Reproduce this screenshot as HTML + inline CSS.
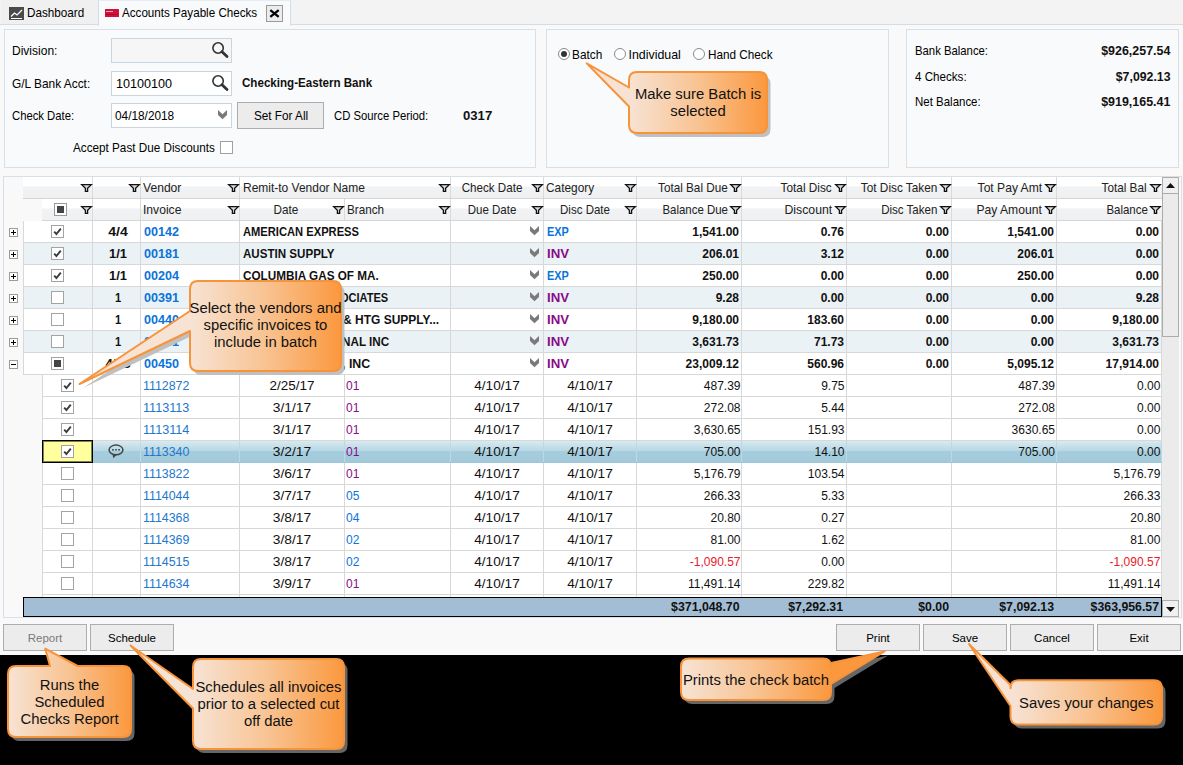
<!DOCTYPE html><html><head><meta charset="utf-8"><style>
html,body{margin:0;padding:0;}
body{width:1183px;height:765px;position:relative;overflow:hidden;background:#000;font-family:"Liberation Sans",sans-serif;}
.t{position:absolute;white-space:nowrap;}
.b{position:absolute;box-sizing:border-box;}
svg{position:absolute;overflow:visible;}
</style></head><body>
<div class="b" style="left:0px;top:0px;width:1183px;height:655px;background:#f9f9fa;"></div>
<div class="b" style="left:0px;top:0px;width:1183px;height:25px;background:#f3f3f3;border-bottom:1px solid #d3dde5;"></div>
<div class="b" style="left:1px;top:0px;width:98px;height:25px;background:#f0f0f0;border-right:1px solid #dfe5ea;border-bottom:1px solid #d3dde5;"></div>
<div class="b" style="left:98px;top:0px;width:193px;height:26px;background:#f9fafb;border:1px solid #d3dde5;border-bottom:none;border-top-color:#e6ecf0;"></div>
<svg style="left:9px;top:7px" width="15" height="13" viewBox="0 0 15 13"><rect x="0" y="0" width="15" height="13" fill="#4a4a4a"/><path d="M2,9.5 L5.5,6 L8,8 L13,3" stroke="#fff" stroke-width="1.2" fill="none"/><path d="M2,11.5 H13" stroke="#fff" stroke-width="1" fill="none"/></svg>
<div class="t" style="left:27.00px;top:4.70px;font-size:12.4px;line-height:16px;color:#000;transform:scaleX(0.9435);transform-origin:left center;">Dashboard</div>
<svg style="left:105px;top:9px" width="14" height="8" viewBox="0 0 14 8"><rect x="0" y="0" width="14" height="8" rx="0.5" fill="#d0103a"/><rect x="1" y="2" width="7" height="1" fill="#f3a0b0"/><rect x="1" y="5" width="12" height="0.8" fill="#a00828"/></svg>
<div class="t" style="left:122.00px;top:4.70px;font-size:12.4px;line-height:16px;color:#000;transform:scaleX(0.9392);transform-origin:left center;">Accounts Payable Checks</div>
<div class="b" style="left:266px;top:5px;width:17px;height:17px;background:#ececec;border:1px solid #9a9a9a;"></div>
<svg style="left:269px;top:9px" width="11" height="9" viewBox="0 0 11 9"><path d="M1.3,1.2 L9.7,7.8 M9.7,1.2 L1.3,7.8" stroke="#000" stroke-width="2.3"/></svg>
<div class="b" style="left:4px;top:29px;width:532px;height:139px;background:#f9fafb;border:1px solid #d6e0e6;"></div>
<div class="b" style="left:546px;top:29px;width:343px;height:139px;background:#f9fafb;border:1px solid #d6e0e6;"></div>
<div class="b" style="left:906px;top:29px;width:273px;height:139px;background:#f9fafb;border:1px solid #d6e0e6;"></div>
<div class="t" style="left:12.40px;top:42.70px;font-size:12.4px;line-height:16px;color:#000;transform:scaleX(0.9695);transform-origin:left center;">Division:</div>
<div class="b" style="left:111px;top:38px;width:121px;height:25px;background:#f6f6f6;border:1px solid #c9d6df;"></div>
<div class="t" style="left:12.40px;top:75.70px;font-size:12.4px;line-height:16px;color:#000;transform:scaleX(0.9595);transform-origin:left center;">G/L Bank Acct:</div>
<div class="b" style="left:111px;top:71px;width:121px;height:25px;background:#fff;border:1px solid #c9d6df;"></div>
<svg style="left:212px;top:42px" width="16" height="16" viewBox="0 0 16 16"><circle cx="6.1" cy="6" r="5.2" stroke="#333" stroke-width="1.6" fill="none"/><path d="M10,9.8 L15,14.6" stroke="#333" stroke-width="2.8" stroke-linecap="round"/></svg>
<svg style="left:212px;top:75px" width="16" height="16" viewBox="0 0 16 16"><circle cx="6.1" cy="6" r="5.2" stroke="#333" stroke-width="1.6" fill="none"/><path d="M10,9.8 L15,14.6" stroke="#333" stroke-width="2.8" stroke-linecap="round"/></svg>
<div class="t" style="left:116.30px;top:75.74px;font-size:12.3px;line-height:16px;color:#000;transform:scaleX(1.0252);transform-origin:left center;">10100100</div>
<div class="t" style="left:241.80px;top:74.84px;font-size:12px;line-height:16px;font-weight:700;color:#111;transform:scaleX(0.9657);transform-origin:left center;">Checking-Eastern Bank</div>
<div class="t" style="left:12.40px;top:107.70px;font-size:12.4px;line-height:16px;color:#000;transform:scaleX(0.9107);transform-origin:left center;">Check Date:</div>
<div class="b" style="left:111px;top:103px;width:121px;height:25px;background:#fff;border:1px solid #c9d6df;"></div>
<div class="t" style="left:115.00px;top:107.84px;font-size:12px;line-height:16px;color:#000;transform:scaleX(0.9856);transform-origin:left center;">04/18/2018</div>
<svg style="left:218px;top:110px" width="9" height="10" viewBox="0 0 9 10"><path d="M0,0 L4.5,4.3 L9,0 L9,5 L4.5,9.3 L0,5 Z" fill="#7a7a7a"/></svg>
<div class="b" style="left:237px;top:102px;width:87px;height:27px;background:#ececec;border:1px solid #adadad;"></div>
<div class="t" style="left:130.50px;width:300px;text-align:center;top:107.70px;font-size:12.4px;line-height:16px;color:#000;transform:scaleX(0.9483);transform-origin:center center;">Set For All</div>
<div class="t" style="left:334.00px;top:107.70px;font-size:12.4px;line-height:16px;color:#000;transform:scaleX(0.9118);transform-origin:left center;">CD Source Period:</div>
<div class="t" style="left:462.70px;top:107.74px;font-size:12.3px;line-height:16px;font-weight:700;color:#111;transform:scaleX(1.0673);transform-origin:left center;">0317</div>
<div class="t" style="left:73.20px;top:139.70px;font-size:12.4px;line-height:16px;color:#000;transform:scaleX(0.9451);transform-origin:left center;">Accept Past Due Discounts</div>
<div class="b" style="left:220px;top:141px;width:13px;height:13px;background:#fff;border:1px solid #a0a0a0;"></div>
<svg style="left:558px;top:48px" width="12" height="12" viewBox="0 0 12 12"><circle cx="6" cy="6" r="5.5" fill="#fff" stroke="#8a8a8a" stroke-width="1"/><circle cx="6" cy="6" r="3" fill="#333"/></svg>
<div class="t" style="left:572.40px;top:46.70px;font-size:12.4px;line-height:16px;color:#000;transform:scaleX(0.9531);transform-origin:left center;">Batch</div>
<svg style="left:614px;top:48px" width="12" height="12" viewBox="0 0 12 12"><circle cx="6" cy="6" r="5.5" fill="#fff" stroke="#8a8a8a" stroke-width="1"/></svg>
<div class="t" style="left:628.50px;top:46.70px;font-size:12.4px;line-height:16px;color:#000;">Individual</div>
<svg style="left:693px;top:48px" width="12" height="12" viewBox="0 0 12 12"><circle cx="6" cy="6" r="5.5" fill="#fff" stroke="#8a8a8a" stroke-width="1"/></svg>
<div class="t" style="left:707.60px;top:46.70px;font-size:12.4px;line-height:16px;color:#000;transform:scaleX(0.9474);transform-origin:left center;">Hand Check</div>
<div class="t" style="left:914.60px;top:42.70px;font-size:12.4px;line-height:16px;color:#000;transform:scaleX(0.9136);transform-origin:left center;">Bank Balance:</div>
<div class="t" style="right:12.50px;top:42.74px;font-size:12.3px;line-height:16px;font-weight:700;color:#111;transform:scaleX(1.0118);transform-origin:right center;">$926,257.54</div>
<div class="t" style="left:914.60px;top:68.70px;font-size:12.4px;line-height:16px;color:#000;transform:scaleX(0.9366);transform-origin:left center;">4 Checks:</div>
<div class="t" style="right:12.50px;top:68.74px;font-size:12.3px;line-height:16px;font-weight:700;color:#111;">$7,092.13</div>
<div class="t" style="left:914.60px;top:93.70px;font-size:12.4px;line-height:16px;color:#000;transform:scaleX(0.9260);transform-origin:left center;">Net Balance:</div>
<div class="t" style="right:12.50px;top:93.74px;font-size:12.3px;line-height:16px;font-weight:700;color:#111;transform:scaleX(1.0118);transform-origin:right center;">$919,165.41</div>
<div class="b" style="left:3px;top:176px;width:1179px;height:442px;background:#f9f9fa;border:1px solid #d6e0e6;"></div>
<div class="b" style="left:23px;top:177px;width:1139px;height:22px;background:linear-gradient(#ffffff 0,#ffffff 9px,#f0f2f4 10px,#eef0f2 100%);border-bottom:1px solid #d5d5d5;"></div>
<div class="b" style="left:42px;top:199px;width:1120px;height:22px;background:linear-gradient(#ffffff 0,#ffffff 9px,#f0f2f4 10px,#eef0f2 100%);border-bottom:1px solid #d5d5d5;"></div>
<div class="b" style="left:92px;top:177px;width:1px;height:21px;background:#dadada;"></div>
<div class="b" style="left:140px;top:177px;width:1px;height:21px;background:#dadada;"></div>
<div class="b" style="left:239px;top:177px;width:1px;height:21px;background:#dadada;"></div>
<div class="b" style="left:450px;top:177px;width:1px;height:21px;background:#dadada;"></div>
<div class="b" style="left:543px;top:177px;width:1px;height:21px;background:#dadada;"></div>
<div class="b" style="left:636px;top:177px;width:1px;height:21px;background:#dadada;"></div>
<div class="b" style="left:741px;top:177px;width:1px;height:21px;background:#dadada;"></div>
<div class="b" style="left:846px;top:177px;width:1px;height:21px;background:#dadada;"></div>
<div class="b" style="left:951px;top:177px;width:1px;height:21px;background:#dadada;"></div>
<div class="b" style="left:1056px;top:177px;width:1px;height:21px;background:#dadada;"></div>
<div class="b" style="left:92px;top:199px;width:1px;height:21px;background:#dadada;"></div>
<div class="b" style="left:140px;top:199px;width:1px;height:21px;background:#dadada;"></div>
<div class="b" style="left:239px;top:199px;width:1px;height:21px;background:#dadada;"></div>
<div class="b" style="left:344px;top:199px;width:1px;height:21px;background:#dadada;"></div>
<div class="b" style="left:450px;top:199px;width:1px;height:21px;background:#dadada;"></div>
<div class="b" style="left:543px;top:199px;width:1px;height:21px;background:#dadada;"></div>
<div class="b" style="left:636px;top:199px;width:1px;height:21px;background:#dadada;"></div>
<div class="b" style="left:741px;top:199px;width:1px;height:21px;background:#dadada;"></div>
<div class="b" style="left:846px;top:199px;width:1px;height:21px;background:#dadada;"></div>
<div class="b" style="left:951px;top:199px;width:1px;height:21px;background:#dadada;"></div>
<div class="b" style="left:1056px;top:199px;width:1px;height:21px;background:#dadada;"></div>
<svg style="left:81px;top:184px" width="11" height="8" viewBox="0 0 11 8"><path d="M0.7,0.7 H10.3 L6.6,4.3 V7.3 H4.4 V4.3 Z" fill="#d8d8d8" stroke="#111" stroke-width="1.3" stroke-linejoin="miter"/></svg>
<svg style="left:129px;top:184px" width="11" height="8" viewBox="0 0 11 8"><path d="M0.7,0.7 H10.3 L6.6,4.3 V7.3 H4.4 V4.3 Z" fill="#d8d8d8" stroke="#111" stroke-width="1.3" stroke-linejoin="miter"/></svg>
<div class="t" style="left:143.40px;top:179.70px;font-size:12.4px;line-height:16px;color:#222;transform:scaleX(0.9776);transform-origin:left center;">Vendor</div>
<svg style="left:228px;top:184px" width="11" height="8" viewBox="0 0 11 8"><path d="M0.7,0.7 H10.3 L6.6,4.3 V7.3 H4.4 V4.3 Z" fill="#d8d8d8" stroke="#111" stroke-width="1.3" stroke-linejoin="miter"/></svg>
<div class="t" style="left:242.50px;top:179.70px;font-size:12.4px;line-height:16px;color:#222;transform:scaleX(0.9672);transform-origin:left center;">Remit-to Vendor Name</div>
<svg style="left:439px;top:184px" width="11" height="8" viewBox="0 0 11 8"><path d="M0.7,0.7 H10.3 L6.6,4.3 V7.3 H4.4 V4.3 Z" fill="#d8d8d8" stroke="#111" stroke-width="1.3" stroke-linejoin="miter"/></svg>
<div class="t" style="left:341.55px;width:300px;text-align:center;top:179.70px;font-size:12.4px;line-height:16px;color:#222;transform:scaleX(0.9375);transform-origin:center center;">Check Date</div>
<svg style="left:532px;top:184px" width="11" height="8" viewBox="0 0 11 8"><path d="M0.7,0.7 H10.3 L6.6,4.3 V7.3 H4.4 V4.3 Z" fill="#d8d8d8" stroke="#111" stroke-width="1.3" stroke-linejoin="miter"/></svg>
<div class="t" style="left:546.00px;top:179.70px;font-size:12.4px;line-height:16px;color:#222;transform:scaleX(0.9566);transform-origin:left center;">Category</div>
<svg style="left:625px;top:184px" width="11" height="8" viewBox="0 0 11 8"><path d="M0.7,0.7 H10.3 L6.6,4.3 V7.3 H4.4 V4.3 Z" fill="#d8d8d8" stroke="#111" stroke-width="1.3" stroke-linejoin="miter"/></svg>
<div class="t" style="right:455.50px;top:179.70px;font-size:12.4px;line-height:16px;color:#222;transform:scaleX(0.9443);transform-origin:right center;">Total Bal Due</div>
<svg style="left:730px;top:184px" width="11" height="8" viewBox="0 0 11 8"><path d="M0.7,0.7 H10.3 L6.6,4.3 V7.3 H4.4 V4.3 Z" fill="#d8d8d8" stroke="#111" stroke-width="1.3" stroke-linejoin="miter"/></svg>
<div class="t" style="right:351.00px;top:179.70px;font-size:12.4px;line-height:16px;color:#222;transform:scaleX(0.9513);transform-origin:right center;">Total Disc</div>
<svg style="left:835px;top:184px" width="11" height="8" viewBox="0 0 11 8"><path d="M0.7,0.7 H10.3 L6.6,4.3 V7.3 H4.4 V4.3 Z" fill="#d8d8d8" stroke="#111" stroke-width="1.3" stroke-linejoin="miter"/></svg>
<div class="t" style="right:246.00px;top:179.70px;font-size:12.4px;line-height:16px;color:#222;transform:scaleX(0.9522);transform-origin:right center;">Tot Disc Taken</div>
<svg style="left:940px;top:184px" width="11" height="8" viewBox="0 0 11 8"><path d="M0.7,0.7 H10.3 L6.6,4.3 V7.3 H4.4 V4.3 Z" fill="#d8d8d8" stroke="#111" stroke-width="1.3" stroke-linejoin="miter"/></svg>
<div class="t" style="right:141.00px;top:179.70px;font-size:12.4px;line-height:16px;color:#222;transform:scaleX(0.9757);transform-origin:right center;">Tot Pay Amt</div>
<svg style="left:1045px;top:184px" width="11" height="8" viewBox="0 0 11 8"><path d="M0.7,0.7 H10.3 L6.6,4.3 V7.3 H4.4 V4.3 Z" fill="#d8d8d8" stroke="#111" stroke-width="1.3" stroke-linejoin="miter"/></svg>
<div class="t" style="right:36.20px;top:179.70px;font-size:12.4px;line-height:16px;color:#222;transform:scaleX(0.9467);transform-origin:right center;">Total Bal</div>
<svg style="left:1150px;top:184px" width="11" height="8" viewBox="0 0 11 8"><path d="M0.7,0.7 H10.3 L6.6,4.3 V7.3 H4.4 V4.3 Z" fill="#d8d8d8" stroke="#111" stroke-width="1.3" stroke-linejoin="miter"/></svg>
<div class="b" style="left:54px;top:203px;width:13px;height:13px;background:#fff;border:1px solid #9a9a9a;"></div>
<div class="b" style="left:57px;top:206px;width:7px;height:7px;background:#444;"></div>
<svg style="left:81px;top:206px" width="11" height="8" viewBox="0 0 11 8"><path d="M0.7,0.7 H10.3 L6.6,4.3 V7.3 H4.4 V4.3 Z" fill="#d8d8d8" stroke="#111" stroke-width="1.3" stroke-linejoin="miter"/></svg>
<div class="t" style="left:143.40px;top:201.70px;font-size:12.4px;line-height:16px;color:#222;transform:scaleX(0.9780);transform-origin:left center;">Invoice</div>
<svg style="left:228px;top:206px" width="11" height="8" viewBox="0 0 11 8"><path d="M0.7,0.7 H10.3 L6.6,4.3 V7.3 H4.4 V4.3 Z" fill="#d8d8d8" stroke="#111" stroke-width="1.3" stroke-linejoin="miter"/></svg>
<div class="t" style="left:136.30px;width:300px;text-align:center;top:201.70px;font-size:12.4px;line-height:16px;color:#222;transform:scaleX(0.9470);transform-origin:center center;">Date</div>
<svg style="left:333px;top:206px" width="11" height="8" viewBox="0 0 11 8"><path d="M0.7,0.7 H10.3 L6.6,4.3 V7.3 H4.4 V4.3 Z" fill="#d8d8d8" stroke="#111" stroke-width="1.3" stroke-linejoin="miter"/></svg>
<div class="t" style="left:347.40px;top:201.70px;font-size:12.4px;line-height:16px;color:#222;transform:scaleX(0.9448);transform-origin:left center;">Branch</div>
<svg style="left:439px;top:206px" width="11" height="8" viewBox="0 0 11 8"><path d="M0.7,0.7 H10.3 L6.6,4.3 V7.3 H4.4 V4.3 Z" fill="#d8d8d8" stroke="#111" stroke-width="1.3" stroke-linejoin="miter"/></svg>
<div class="t" style="left:341.50px;width:300px;text-align:center;top:201.70px;font-size:12.4px;line-height:16px;color:#222;transform:scaleX(0.9282);transform-origin:center center;">Due Date</div>
<svg style="left:532px;top:206px" width="11" height="8" viewBox="0 0 11 8"><path d="M0.7,0.7 H10.3 L6.6,4.3 V7.3 H4.4 V4.3 Z" fill="#d8d8d8" stroke="#111" stroke-width="1.3" stroke-linejoin="miter"/></svg>
<div class="t" style="left:434.50px;width:300px;text-align:center;top:201.70px;font-size:12.4px;line-height:16px;color:#222;transform:scaleX(0.9289);transform-origin:center center;">Disc Date</div>
<svg style="left:625px;top:206px" width="11" height="8" viewBox="0 0 11 8"><path d="M0.7,0.7 H10.3 L6.6,4.3 V7.3 H4.4 V4.3 Z" fill="#d8d8d8" stroke="#111" stroke-width="1.3" stroke-linejoin="miter"/></svg>
<div class="t" style="right:455.50px;top:201.70px;font-size:12.4px;line-height:16px;color:#222;transform:scaleX(0.9231);transform-origin:right center;">Balance Due</div>
<svg style="left:730px;top:206px" width="11" height="8" viewBox="0 0 11 8"><path d="M0.7,0.7 H10.3 L6.6,4.3 V7.3 H4.4 V4.3 Z" fill="#d8d8d8" stroke="#111" stroke-width="1.3" stroke-linejoin="miter"/></svg>
<div class="t" style="right:350.70px;top:201.70px;font-size:12.4px;line-height:16px;color:#222;transform:scaleX(0.9892);transform-origin:right center;">Discount</div>
<svg style="left:835px;top:206px" width="11" height="8" viewBox="0 0 11 8"><path d="M0.7,0.7 H10.3 L6.6,4.3 V7.3 H4.4 V4.3 Z" fill="#d8d8d8" stroke="#111" stroke-width="1.3" stroke-linejoin="miter"/></svg>
<div class="t" style="right:246.00px;top:201.70px;font-size:12.4px;line-height:16px;color:#222;transform:scaleX(0.9308);transform-origin:right center;">Disc Taken</div>
<svg style="left:940px;top:206px" width="11" height="8" viewBox="0 0 11 8"><path d="M0.7,0.7 H10.3 L6.6,4.3 V7.3 H4.4 V4.3 Z" fill="#d8d8d8" stroke="#111" stroke-width="1.3" stroke-linejoin="miter"/></svg>
<div class="t" style="right:141.00px;top:201.70px;font-size:12.4px;line-height:16px;color:#222;transform:scaleX(0.9789);transform-origin:right center;">Pay Amount</div>
<svg style="left:1045px;top:206px" width="11" height="8" viewBox="0 0 11 8"><path d="M0.7,0.7 H10.3 L6.6,4.3 V7.3 H4.4 V4.3 Z" fill="#d8d8d8" stroke="#111" stroke-width="1.3" stroke-linejoin="miter"/></svg>
<div class="t" style="right:35.70px;top:201.70px;font-size:12.4px;line-height:16px;color:#222;transform:scaleX(0.9245);transform-origin:right center;">Balance</div>
<svg style="left:1150px;top:206px" width="11" height="8" viewBox="0 0 11 8"><path d="M0.7,0.7 H10.3 L6.6,4.3 V7.3 H4.4 V4.3 Z" fill="#d8d8d8" stroke="#111" stroke-width="1.3" stroke-linejoin="miter"/></svg>
<div class="b" style="left:1162px;top:177px;width:17px;height:440px;background:#ebebeb;"></div>
<div class="b" style="left:1162px;top:177px;width:17px;height:17px;background:#f0f0f0;border:1px solid #adadad;"></div>
<svg style="left:1166px;top:183px" width="9" height="5" viewBox="0 0 9 5"><path d="M0,5 L4.5,0 L9,5 Z" fill="#111"/></svg>
<div class="b" style="left:1162px;top:193px;width:17px;height:144px;background:#ebebeb;border:1px solid #ababab;"></div>
<div class="b" style="left:1162px;top:600px;width:17px;height:17px;background:#f0f0f0;border:1px solid #adadad;"></div>
<svg style="left:1166px;top:607px" width="9" height="5" viewBox="0 0 9 5"><path d="M0,0 L4.5,5 L9,0 Z" fill="#111"/></svg>
<div class="b" style="left:23px;top:221px;width:1139px;height:22px;background:#ffffff;border-bottom:1px solid #d8d8d8;border-left:1px solid #d8d8d8;"></div>
<div class="b" style="left:92px;top:221px;width:1px;height:21px;background:#d8d8d8;"></div>
<div class="b" style="left:140px;top:221px;width:1px;height:21px;background:#d8d8d8;"></div>
<div class="b" style="left:239px;top:221px;width:1px;height:21px;background:#d8d8d8;"></div>
<div class="b" style="left:450px;top:221px;width:1px;height:21px;background:#d8d8d8;"></div>
<div class="b" style="left:543px;top:221px;width:1px;height:21px;background:#d8d8d8;"></div>
<div class="b" style="left:636px;top:221px;width:1px;height:21px;background:#d8d8d8;"></div>
<div class="b" style="left:741px;top:221px;width:1px;height:21px;background:#d8d8d8;"></div>
<div class="b" style="left:846px;top:221px;width:1px;height:21px;background:#d8d8d8;"></div>
<div class="b" style="left:951px;top:221px;width:1px;height:21px;background:#d8d8d8;"></div>
<div class="b" style="left:1056px;top:221px;width:1px;height:21px;background:#d8d8d8;"></div>
<div class="b" style="left:1161px;top:221px;width:1px;height:21px;background:#d8d8d8;"></div>
<div class="b" style="left:9px;top:228px;width:9px;height:9px;background:#fff;border:1px solid #9c9c9c;"></div>
<div class="b" style="left:11px;top:232px;width:5px;height:1px;background:#000;"></div>
<div class="b" style="left:13px;top:230px;width:1px;height:5px;background:#000;"></div>
<div class="b" style="left:51px;top:225px;width:13px;height:13px;background:#fff;border:1px solid #a3a3a3;"></div>
<svg style="left:51px;top:225px" width="13" height="13" viewBox="0 0 13 13"><path d="M3.2,6.6 L5.4,9 L9.8,3.6" stroke="#3c3c3c" stroke-width="1.9" fill="none"/></svg>
<div class="t" style="left:-32.50px;width:300px;text-align:center;top:223.74px;font-size:12.3px;line-height:16px;font-weight:700;color:#111;transform:scaleX(1.1456);transform-origin:center center;">4/4</div>
<div class="t" style="left:143.60px;top:223.74px;font-size:12.3px;line-height:16px;font-weight:700;color:#0a74da;transform:scaleX(1.0233);transform-origin:left center;">00142</div>
<div class="t" style="left:242.50px;top:223.74px;font-size:12.3px;line-height:16px;font-weight:700;color:#111;transform:scaleX(0.9078);transform-origin:left center;">AMERICAN EXPRESS</div>
<svg style="left:530px;top:226px" width="9" height="10" viewBox="0 0 9 10"><path d="M0,0 L4.5,4.3 L9,0 L9,5 L4.5,9.3 L0,5 Z" fill="#7a7a7a"/></svg>
<div class="t" style="left:546.70px;top:223.74px;font-size:12.3px;line-height:16px;font-weight:700;color:#0a74da;transform:scaleX(0.8858);transform-origin:left center;">EXP</div>
<div class="t" style="right:444.00px;top:223.84px;font-size:12px;line-height:16px;font-weight:700;color:#111;">1,541.00</div>
<div class="t" style="right:339.00px;top:223.84px;font-size:12px;line-height:16px;font-weight:700;color:#111;">0.76</div>
<div class="t" style="right:234.00px;top:223.84px;font-size:12px;line-height:16px;font-weight:700;color:#111;">0.00</div>
<div class="t" style="right:129.00px;top:223.84px;font-size:12px;line-height:16px;font-weight:700;color:#111;">1,541.00</div>
<div class="t" style="right:24.00px;top:223.84px;font-size:12px;line-height:16px;font-weight:700;color:#111;">0.00</div>
<div class="b" style="left:23px;top:243px;width:1139px;height:22px;background:#ebf2f5;border-bottom:1px solid #d8d8d8;border-left:1px solid #d8d8d8;"></div>
<div class="b" style="left:92px;top:243px;width:1px;height:21px;background:#d8d8d8;"></div>
<div class="b" style="left:140px;top:243px;width:1px;height:21px;background:#d8d8d8;"></div>
<div class="b" style="left:239px;top:243px;width:1px;height:21px;background:#d8d8d8;"></div>
<div class="b" style="left:450px;top:243px;width:1px;height:21px;background:#d8d8d8;"></div>
<div class="b" style="left:543px;top:243px;width:1px;height:21px;background:#d8d8d8;"></div>
<div class="b" style="left:636px;top:243px;width:1px;height:21px;background:#d8d8d8;"></div>
<div class="b" style="left:741px;top:243px;width:1px;height:21px;background:#d8d8d8;"></div>
<div class="b" style="left:846px;top:243px;width:1px;height:21px;background:#d8d8d8;"></div>
<div class="b" style="left:951px;top:243px;width:1px;height:21px;background:#d8d8d8;"></div>
<div class="b" style="left:1056px;top:243px;width:1px;height:21px;background:#d8d8d8;"></div>
<div class="b" style="left:1161px;top:243px;width:1px;height:21px;background:#d8d8d8;"></div>
<div class="b" style="left:9px;top:250px;width:9px;height:9px;background:#fff;border:1px solid #9c9c9c;"></div>
<div class="b" style="left:11px;top:254px;width:5px;height:1px;background:#000;"></div>
<div class="b" style="left:13px;top:252px;width:1px;height:5px;background:#000;"></div>
<div class="b" style="left:51px;top:247px;width:13px;height:13px;background:#fff;border:1px solid #a3a3a3;"></div>
<svg style="left:51px;top:247px" width="13" height="13" viewBox="0 0 13 13"><path d="M3.2,6.6 L5.4,9 L9.8,3.6" stroke="#3c3c3c" stroke-width="1.9" fill="none"/></svg>
<div class="t" style="left:-32.50px;width:300px;text-align:center;top:245.74px;font-size:12.3px;line-height:16px;font-weight:700;color:#111;transform:scaleX(1.0462);transform-origin:center center;">1/1</div>
<div class="t" style="left:143.60px;top:245.74px;font-size:12.3px;line-height:16px;font-weight:700;color:#0a74da;transform:scaleX(1.0233);transform-origin:left center;">00181</div>
<div class="t" style="left:242.50px;top:245.74px;font-size:12.3px;line-height:16px;font-weight:700;color:#111;transform:scaleX(0.9418);transform-origin:left center;">AUSTIN SUPPLY</div>
<svg style="left:530px;top:248px" width="9" height="10" viewBox="0 0 9 10"><path d="M0,0 L4.5,4.3 L9,0 L9,5 L4.5,9.3 L0,5 Z" fill="#7a7a7a"/></svg>
<div class="t" style="left:546.70px;top:245.74px;font-size:12.3px;line-height:16px;font-weight:700;color:#8a0a8a;transform:scaleX(1.0780);transform-origin:left center;">INV</div>
<div class="t" style="right:444.00px;top:245.84px;font-size:12px;line-height:16px;font-weight:700;color:#111;">206.01</div>
<div class="t" style="right:339.00px;top:245.84px;font-size:12px;line-height:16px;font-weight:700;color:#111;">3.12</div>
<div class="t" style="right:234.00px;top:245.84px;font-size:12px;line-height:16px;font-weight:700;color:#111;">0.00</div>
<div class="t" style="right:129.00px;top:245.84px;font-size:12px;line-height:16px;font-weight:700;color:#111;">206.01</div>
<div class="t" style="right:24.00px;top:245.84px;font-size:12px;line-height:16px;font-weight:700;color:#111;">0.00</div>
<div class="b" style="left:23px;top:265px;width:1139px;height:22px;background:#ffffff;border-bottom:1px solid #d8d8d8;border-left:1px solid #d8d8d8;"></div>
<div class="b" style="left:92px;top:265px;width:1px;height:21px;background:#d8d8d8;"></div>
<div class="b" style="left:140px;top:265px;width:1px;height:21px;background:#d8d8d8;"></div>
<div class="b" style="left:239px;top:265px;width:1px;height:21px;background:#d8d8d8;"></div>
<div class="b" style="left:450px;top:265px;width:1px;height:21px;background:#d8d8d8;"></div>
<div class="b" style="left:543px;top:265px;width:1px;height:21px;background:#d8d8d8;"></div>
<div class="b" style="left:636px;top:265px;width:1px;height:21px;background:#d8d8d8;"></div>
<div class="b" style="left:741px;top:265px;width:1px;height:21px;background:#d8d8d8;"></div>
<div class="b" style="left:846px;top:265px;width:1px;height:21px;background:#d8d8d8;"></div>
<div class="b" style="left:951px;top:265px;width:1px;height:21px;background:#d8d8d8;"></div>
<div class="b" style="left:1056px;top:265px;width:1px;height:21px;background:#d8d8d8;"></div>
<div class="b" style="left:1161px;top:265px;width:1px;height:21px;background:#d8d8d8;"></div>
<div class="b" style="left:9px;top:272px;width:9px;height:9px;background:#fff;border:1px solid #9c9c9c;"></div>
<div class="b" style="left:11px;top:276px;width:5px;height:1px;background:#000;"></div>
<div class="b" style="left:13px;top:274px;width:1px;height:5px;background:#000;"></div>
<div class="b" style="left:51px;top:269px;width:13px;height:13px;background:#fff;border:1px solid #a3a3a3;"></div>
<svg style="left:51px;top:269px" width="13" height="13" viewBox="0 0 13 13"><path d="M3.2,6.6 L5.4,9 L9.8,3.6" stroke="#3c3c3c" stroke-width="1.9" fill="none"/></svg>
<div class="t" style="left:-32.50px;width:300px;text-align:center;top:267.74px;font-size:12.3px;line-height:16px;font-weight:700;color:#111;transform:scaleX(1.0462);transform-origin:center center;">1/1</div>
<div class="t" style="left:143.60px;top:267.74px;font-size:12.3px;line-height:16px;font-weight:700;color:#0a74da;transform:scaleX(1.0233);transform-origin:left center;">00204</div>
<div class="t" style="left:242.50px;top:267.74px;font-size:12.3px;line-height:16px;font-weight:700;color:#111;transform:scaleX(0.9541);transform-origin:left center;">COLUMBIA GAS OF MA.</div>
<svg style="left:530px;top:270px" width="9" height="10" viewBox="0 0 9 10"><path d="M0,0 L4.5,4.3 L9,0 L9,5 L4.5,9.3 L0,5 Z" fill="#7a7a7a"/></svg>
<div class="t" style="left:546.70px;top:267.74px;font-size:12.3px;line-height:16px;font-weight:700;color:#0a74da;transform:scaleX(0.8858);transform-origin:left center;">EXP</div>
<div class="t" style="right:444.00px;top:267.84px;font-size:12px;line-height:16px;font-weight:700;color:#111;">250.00</div>
<div class="t" style="right:339.00px;top:267.84px;font-size:12px;line-height:16px;font-weight:700;color:#111;">0.00</div>
<div class="t" style="right:234.00px;top:267.84px;font-size:12px;line-height:16px;font-weight:700;color:#111;">0.00</div>
<div class="t" style="right:129.00px;top:267.84px;font-size:12px;line-height:16px;font-weight:700;color:#111;">250.00</div>
<div class="t" style="right:24.00px;top:267.84px;font-size:12px;line-height:16px;font-weight:700;color:#111;">0.00</div>
<div class="b" style="left:23px;top:287px;width:1139px;height:22px;background:#ebf2f5;border-bottom:1px solid #d8d8d8;border-left:1px solid #d8d8d8;"></div>
<div class="b" style="left:92px;top:287px;width:1px;height:21px;background:#d8d8d8;"></div>
<div class="b" style="left:140px;top:287px;width:1px;height:21px;background:#d8d8d8;"></div>
<div class="b" style="left:239px;top:287px;width:1px;height:21px;background:#d8d8d8;"></div>
<div class="b" style="left:450px;top:287px;width:1px;height:21px;background:#d8d8d8;"></div>
<div class="b" style="left:543px;top:287px;width:1px;height:21px;background:#d8d8d8;"></div>
<div class="b" style="left:636px;top:287px;width:1px;height:21px;background:#d8d8d8;"></div>
<div class="b" style="left:741px;top:287px;width:1px;height:21px;background:#d8d8d8;"></div>
<div class="b" style="left:846px;top:287px;width:1px;height:21px;background:#d8d8d8;"></div>
<div class="b" style="left:951px;top:287px;width:1px;height:21px;background:#d8d8d8;"></div>
<div class="b" style="left:1056px;top:287px;width:1px;height:21px;background:#d8d8d8;"></div>
<div class="b" style="left:1161px;top:287px;width:1px;height:21px;background:#d8d8d8;"></div>
<div class="b" style="left:9px;top:294px;width:9px;height:9px;background:#fff;border:1px solid #9c9c9c;"></div>
<div class="b" style="left:11px;top:298px;width:5px;height:1px;background:#000;"></div>
<div class="b" style="left:13px;top:296px;width:1px;height:5px;background:#000;"></div>
<div class="b" style="left:51px;top:291px;width:13px;height:13px;background:#fff;border:1px solid #a3a3a3;"></div>
<div class="t" style="left:-32.50px;width:300px;text-align:center;top:289.74px;font-size:12.3px;line-height:16px;font-weight:700;color:#111;transform:scaleX(0.9059);transform-origin:center center;">1</div>
<div class="t" style="left:143.60px;top:289.74px;font-size:12.3px;line-height:16px;font-weight:700;color:#0a74da;transform:scaleX(1.0233);transform-origin:left center;">00391</div>
<svg style="left:530px;top:292px" width="9" height="10" viewBox="0 0 9 10"><path d="M0,0 L4.5,4.3 L9,0 L9,5 L4.5,9.3 L0,5 Z" fill="#7a7a7a"/></svg>
<div class="t" style="left:546.70px;top:289.74px;font-size:12.3px;line-height:16px;font-weight:700;color:#8a0a8a;transform:scaleX(1.0780);transform-origin:left center;">INV</div>
<div class="t" style="right:444.00px;top:289.84px;font-size:12px;line-height:16px;font-weight:700;color:#111;">9.28</div>
<div class="t" style="right:339.00px;top:289.84px;font-size:12px;line-height:16px;font-weight:700;color:#111;">0.00</div>
<div class="t" style="right:234.00px;top:289.84px;font-size:12px;line-height:16px;font-weight:700;color:#111;">0.00</div>
<div class="t" style="right:129.00px;top:289.84px;font-size:12px;line-height:16px;font-weight:700;color:#111;">0.00</div>
<div class="t" style="right:24.00px;top:289.84px;font-size:12px;line-height:16px;font-weight:700;color:#111;">9.28</div>
<div class="b" style="left:23px;top:309px;width:1139px;height:22px;background:#ffffff;border-bottom:1px solid #d8d8d8;border-left:1px solid #d8d8d8;"></div>
<div class="b" style="left:92px;top:309px;width:1px;height:21px;background:#d8d8d8;"></div>
<div class="b" style="left:140px;top:309px;width:1px;height:21px;background:#d8d8d8;"></div>
<div class="b" style="left:239px;top:309px;width:1px;height:21px;background:#d8d8d8;"></div>
<div class="b" style="left:450px;top:309px;width:1px;height:21px;background:#d8d8d8;"></div>
<div class="b" style="left:543px;top:309px;width:1px;height:21px;background:#d8d8d8;"></div>
<div class="b" style="left:636px;top:309px;width:1px;height:21px;background:#d8d8d8;"></div>
<div class="b" style="left:741px;top:309px;width:1px;height:21px;background:#d8d8d8;"></div>
<div class="b" style="left:846px;top:309px;width:1px;height:21px;background:#d8d8d8;"></div>
<div class="b" style="left:951px;top:309px;width:1px;height:21px;background:#d8d8d8;"></div>
<div class="b" style="left:1056px;top:309px;width:1px;height:21px;background:#d8d8d8;"></div>
<div class="b" style="left:1161px;top:309px;width:1px;height:21px;background:#d8d8d8;"></div>
<div class="b" style="left:9px;top:316px;width:9px;height:9px;background:#fff;border:1px solid #9c9c9c;"></div>
<div class="b" style="left:11px;top:320px;width:5px;height:1px;background:#000;"></div>
<div class="b" style="left:13px;top:318px;width:1px;height:5px;background:#000;"></div>
<div class="b" style="left:51px;top:313px;width:13px;height:13px;background:#fff;border:1px solid #a3a3a3;"></div>
<div class="t" style="left:-32.50px;width:300px;text-align:center;top:311.74px;font-size:12.3px;line-height:16px;font-weight:700;color:#111;transform:scaleX(0.9059);transform-origin:center center;">1</div>
<div class="t" style="left:143.60px;top:311.74px;font-size:12.3px;line-height:16px;font-weight:700;color:#0a74da;transform:scaleX(1.0233);transform-origin:left center;">00440</div>
<svg style="left:530px;top:314px" width="9" height="10" viewBox="0 0 9 10"><path d="M0,0 L4.5,4.3 L9,0 L9,5 L4.5,9.3 L0,5 Z" fill="#7a7a7a"/></svg>
<div class="t" style="left:546.70px;top:311.74px;font-size:12.3px;line-height:16px;font-weight:700;color:#8a0a8a;transform:scaleX(1.0780);transform-origin:left center;">INV</div>
<div class="t" style="right:444.00px;top:311.84px;font-size:12px;line-height:16px;font-weight:700;color:#111;">9,180.00</div>
<div class="t" style="right:339.00px;top:311.84px;font-size:12px;line-height:16px;font-weight:700;color:#111;">183.60</div>
<div class="t" style="right:234.00px;top:311.84px;font-size:12px;line-height:16px;font-weight:700;color:#111;">0.00</div>
<div class="t" style="right:129.00px;top:311.84px;font-size:12px;line-height:16px;font-weight:700;color:#111;">0.00</div>
<div class="t" style="right:24.00px;top:311.84px;font-size:12px;line-height:16px;font-weight:700;color:#111;">9,180.00</div>
<div class="b" style="left:23px;top:331px;width:1139px;height:22px;background:#ebf2f5;border-bottom:1px solid #d8d8d8;border-left:1px solid #d8d8d8;"></div>
<div class="b" style="left:92px;top:331px;width:1px;height:21px;background:#d8d8d8;"></div>
<div class="b" style="left:140px;top:331px;width:1px;height:21px;background:#d8d8d8;"></div>
<div class="b" style="left:239px;top:331px;width:1px;height:21px;background:#d8d8d8;"></div>
<div class="b" style="left:450px;top:331px;width:1px;height:21px;background:#d8d8d8;"></div>
<div class="b" style="left:543px;top:331px;width:1px;height:21px;background:#d8d8d8;"></div>
<div class="b" style="left:636px;top:331px;width:1px;height:21px;background:#d8d8d8;"></div>
<div class="b" style="left:741px;top:331px;width:1px;height:21px;background:#d8d8d8;"></div>
<div class="b" style="left:846px;top:331px;width:1px;height:21px;background:#d8d8d8;"></div>
<div class="b" style="left:951px;top:331px;width:1px;height:21px;background:#d8d8d8;"></div>
<div class="b" style="left:1056px;top:331px;width:1px;height:21px;background:#d8d8d8;"></div>
<div class="b" style="left:1161px;top:331px;width:1px;height:21px;background:#d8d8d8;"></div>
<div class="b" style="left:9px;top:338px;width:9px;height:9px;background:#fff;border:1px solid #9c9c9c;"></div>
<div class="b" style="left:11px;top:342px;width:5px;height:1px;background:#000;"></div>
<div class="b" style="left:13px;top:340px;width:1px;height:5px;background:#000;"></div>
<div class="b" style="left:51px;top:335px;width:13px;height:13px;background:#fff;border:1px solid #a3a3a3;"></div>
<div class="t" style="left:-32.50px;width:300px;text-align:center;top:333.74px;font-size:12.3px;line-height:16px;font-weight:700;color:#111;transform:scaleX(0.9059);transform-origin:center center;">1</div>
<div class="t" style="left:143.60px;top:333.74px;font-size:12.3px;line-height:16px;font-weight:700;color:#0a74da;transform:scaleX(1.0233);transform-origin:left center;">00441</div>
<svg style="left:530px;top:336px" width="9" height="10" viewBox="0 0 9 10"><path d="M0,0 L4.5,4.3 L9,0 L9,5 L4.5,9.3 L0,5 Z" fill="#7a7a7a"/></svg>
<div class="t" style="left:546.70px;top:333.74px;font-size:12.3px;line-height:16px;font-weight:700;color:#8a0a8a;transform:scaleX(1.0780);transform-origin:left center;">INV</div>
<div class="t" style="right:444.00px;top:333.84px;font-size:12px;line-height:16px;font-weight:700;color:#111;">3,631.73</div>
<div class="t" style="right:339.00px;top:333.84px;font-size:12px;line-height:16px;font-weight:700;color:#111;">71.73</div>
<div class="t" style="right:234.00px;top:333.84px;font-size:12px;line-height:16px;font-weight:700;color:#111;">0.00</div>
<div class="t" style="right:129.00px;top:333.84px;font-size:12px;line-height:16px;font-weight:700;color:#111;">0.00</div>
<div class="t" style="right:24.00px;top:333.84px;font-size:12px;line-height:16px;font-weight:700;color:#111;">3,631.73</div>
<div class="b" style="left:23px;top:353px;width:1139px;height:22px;background:#ffffff;border-bottom:1px solid #d8d8d8;border-left:1px solid #d8d8d8;"></div>
<div class="b" style="left:92px;top:353px;width:1px;height:21px;background:#d8d8d8;"></div>
<div class="b" style="left:140px;top:353px;width:1px;height:21px;background:#d8d8d8;"></div>
<div class="b" style="left:239px;top:353px;width:1px;height:21px;background:#d8d8d8;"></div>
<div class="b" style="left:450px;top:353px;width:1px;height:21px;background:#d8d8d8;"></div>
<div class="b" style="left:543px;top:353px;width:1px;height:21px;background:#d8d8d8;"></div>
<div class="b" style="left:636px;top:353px;width:1px;height:21px;background:#d8d8d8;"></div>
<div class="b" style="left:741px;top:353px;width:1px;height:21px;background:#d8d8d8;"></div>
<div class="b" style="left:846px;top:353px;width:1px;height:21px;background:#d8d8d8;"></div>
<div class="b" style="left:951px;top:353px;width:1px;height:21px;background:#d8d8d8;"></div>
<div class="b" style="left:1056px;top:353px;width:1px;height:21px;background:#d8d8d8;"></div>
<div class="b" style="left:1161px;top:353px;width:1px;height:21px;background:#d8d8d8;"></div>
<div class="b" style="left:9px;top:360px;width:9px;height:9px;background:#fff;border:1px solid #9c9c9c;"></div>
<div class="b" style="left:11px;top:364px;width:5px;height:1px;background:#000;"></div>
<div class="b" style="left:51px;top:357px;width:13px;height:13px;background:#fff;border:1px solid #a3a3a3;"></div>
<div class="b" style="left:54px;top:360px;width:7px;height:7px;background:#444;"></div>
<div class="t" style="left:-32.50px;width:300px;text-align:center;top:355.74px;font-size:12.3px;line-height:16px;font-weight:700;color:#111;transform:scaleX(1.0527);transform-origin:center center;">4/13</div>
<div class="t" style="left:143.60px;top:355.74px;font-size:12.3px;line-height:16px;font-weight:700;color:#0a74da;transform:scaleX(1.0233);transform-origin:left center;">00450</div>
<svg style="left:530px;top:358px" width="9" height="10" viewBox="0 0 9 10"><path d="M0,0 L4.5,4.3 L9,0 L9,5 L4.5,9.3 L0,5 Z" fill="#7a7a7a"/></svg>
<div class="t" style="left:546.70px;top:355.74px;font-size:12.3px;line-height:16px;font-weight:700;color:#8a0a8a;transform:scaleX(1.0780);transform-origin:left center;">INV</div>
<div class="t" style="right:444.00px;top:355.84px;font-size:12px;line-height:16px;font-weight:700;color:#111;">23,009.12</div>
<div class="t" style="right:339.00px;top:355.84px;font-size:12px;line-height:16px;font-weight:700;color:#111;">560.96</div>
<div class="t" style="right:234.00px;top:355.84px;font-size:12px;line-height:16px;font-weight:700;color:#111;">0.00</div>
<div class="t" style="right:129.00px;top:355.84px;font-size:12px;line-height:16px;font-weight:700;color:#111;">5,095.12</div>
<div class="t" style="right:24.00px;top:355.84px;font-size:12px;line-height:16px;font-weight:700;color:#111;">17,914.00</div>
<div class="t" style="left:340.00px;top:289.74px;font-size:12.3px;line-height:16px;font-weight:700;color:#111;transform:scaleX(0.8967);transform-origin:left center;">OCIATES</div>
<div class="t" style="left:343.30px;top:311.74px;font-size:12.3px;line-height:16px;font-weight:700;color:#111;transform:scaleX(0.9753);transform-origin:left center;">&amp; HTG SUPPLY...</div>
<div class="t" style="left:342.00px;top:333.74px;font-size:12.3px;line-height:16px;font-weight:700;color:#111;transform:scaleX(0.9505);transform-origin:left center;">NAL INC</div>
<div class="t" style="left:342.00px;top:355.74px;font-size:12.3px;line-height:16px;font-weight:700;color:#111;transform:scaleX(1.0066);transform-origin:left center;">, INC</div>
<div class="b" style="left:42px;top:375px;width:1120px;height:22px;background:#fff;border-bottom:1px solid #d8d8d8;border-left:1px solid #d8d8d8;"></div>
<div class="b" style="left:92px;top:375px;width:1px;height:21px;background:#d8d8d8;"></div>
<div class="b" style="left:140px;top:375px;width:1px;height:21px;background:#d8d8d8;"></div>
<div class="b" style="left:239px;top:375px;width:1px;height:21px;background:#d8d8d8;"></div>
<div class="b" style="left:344px;top:375px;width:1px;height:21px;background:#d8d8d8;"></div>
<div class="b" style="left:450px;top:375px;width:1px;height:21px;background:#d8d8d8;"></div>
<div class="b" style="left:543px;top:375px;width:1px;height:21px;background:#d8d8d8;"></div>
<div class="b" style="left:636px;top:375px;width:1px;height:21px;background:#d8d8d8;"></div>
<div class="b" style="left:741px;top:375px;width:1px;height:21px;background:#d8d8d8;"></div>
<div class="b" style="left:846px;top:375px;width:1px;height:21px;background:#d8d8d8;"></div>
<div class="b" style="left:951px;top:375px;width:1px;height:21px;background:#d8d8d8;"></div>
<div class="b" style="left:1056px;top:375px;width:1px;height:21px;background:#d8d8d8;"></div>
<div class="b" style="left:1161px;top:375px;width:1px;height:21px;background:#d8d8d8;"></div>
<div class="b" style="left:61px;top:379px;width:13px;height:13px;background:#fff;border:1px solid #a3a3a3;"></div>
<svg style="left:61px;top:379px" width="13" height="13" viewBox="0 0 13 13"><path d="M3.2,6.6 L5.4,9 L9.8,3.6" stroke="#3c3c3c" stroke-width="1.9" fill="none"/></svg>
<div class="t" style="left:142.80px;top:377.84px;font-size:12px;line-height:16px;color:#2277cc;transform:scaleX(1.0325);transform-origin:left center;">1112872</div>
<div class="t" style="left:142.00px;width:300px;text-align:center;top:377.84px;font-size:12px;line-height:16px;color:#111;transform:scaleX(1.1212);transform-origin:center center;">2/25/17</div>
<div class="t" style="left:346.00px;top:377.84px;font-size:12px;line-height:16px;color:#8a0a8a;">01</div>
<div class="t" style="left:347.10px;width:300px;text-align:center;top:377.84px;font-size:12px;line-height:16px;color:#111;transform:scaleX(1.1362);transform-origin:center center;">4/10/17</div>
<div class="t" style="left:440.00px;width:300px;text-align:center;top:377.84px;font-size:12px;line-height:16px;color:#111;transform:scaleX(1.1362);transform-origin:center center;">4/10/17</div>
<div class="t" style="right:442.50px;top:377.84px;font-size:12px;line-height:16px;color:#111;">487.39</div>
<div class="t" style="right:338.50px;top:377.84px;font-size:12px;line-height:16px;color:#111;">9.75</div>
<div class="t" style="right:128.00px;top:377.84px;font-size:12px;line-height:16px;color:#111;">487.39</div>
<div class="t" style="right:22.70px;top:377.84px;font-size:12px;line-height:16px;color:#111;">0.00</div>
<div class="b" style="left:42px;top:397px;width:1120px;height:22px;background:#fff;border-bottom:1px solid #d8d8d8;border-left:1px solid #d8d8d8;"></div>
<div class="b" style="left:92px;top:397px;width:1px;height:21px;background:#d8d8d8;"></div>
<div class="b" style="left:140px;top:397px;width:1px;height:21px;background:#d8d8d8;"></div>
<div class="b" style="left:239px;top:397px;width:1px;height:21px;background:#d8d8d8;"></div>
<div class="b" style="left:344px;top:397px;width:1px;height:21px;background:#d8d8d8;"></div>
<div class="b" style="left:450px;top:397px;width:1px;height:21px;background:#d8d8d8;"></div>
<div class="b" style="left:543px;top:397px;width:1px;height:21px;background:#d8d8d8;"></div>
<div class="b" style="left:636px;top:397px;width:1px;height:21px;background:#d8d8d8;"></div>
<div class="b" style="left:741px;top:397px;width:1px;height:21px;background:#d8d8d8;"></div>
<div class="b" style="left:846px;top:397px;width:1px;height:21px;background:#d8d8d8;"></div>
<div class="b" style="left:951px;top:397px;width:1px;height:21px;background:#d8d8d8;"></div>
<div class="b" style="left:1056px;top:397px;width:1px;height:21px;background:#d8d8d8;"></div>
<div class="b" style="left:1161px;top:397px;width:1px;height:21px;background:#d8d8d8;"></div>
<div class="b" style="left:61px;top:401px;width:13px;height:13px;background:#fff;border:1px solid #a3a3a3;"></div>
<svg style="left:61px;top:401px" width="13" height="13" viewBox="0 0 13 13"><path d="M3.2,6.6 L5.4,9 L9.8,3.6" stroke="#3c3c3c" stroke-width="1.9" fill="none"/></svg>
<div class="t" style="left:142.80px;top:399.84px;font-size:12px;line-height:16px;color:#2277cc;transform:scaleX(1.0534);transform-origin:left center;">1113113</div>
<div class="t" style="left:142.00px;width:300px;text-align:center;top:399.84px;font-size:12px;line-height:16px;color:#111;transform:scaleX(1.1506);transform-origin:center center;">3/1/17</div>
<div class="t" style="left:346.00px;top:399.84px;font-size:12px;line-height:16px;color:#8a0a8a;">01</div>
<div class="t" style="left:347.10px;width:300px;text-align:center;top:399.84px;font-size:12px;line-height:16px;color:#111;transform:scaleX(1.1362);transform-origin:center center;">4/10/17</div>
<div class="t" style="left:440.00px;width:300px;text-align:center;top:399.84px;font-size:12px;line-height:16px;color:#111;transform:scaleX(1.1362);transform-origin:center center;">4/10/17</div>
<div class="t" style="right:442.50px;top:399.84px;font-size:12px;line-height:16px;color:#111;">272.08</div>
<div class="t" style="right:338.50px;top:399.84px;font-size:12px;line-height:16px;color:#111;">5.44</div>
<div class="t" style="right:128.00px;top:399.84px;font-size:12px;line-height:16px;color:#111;">272.08</div>
<div class="t" style="right:22.70px;top:399.84px;font-size:12px;line-height:16px;color:#111;">0.00</div>
<div class="b" style="left:42px;top:419px;width:1120px;height:22px;background:#fff;border-bottom:1px solid #d8d8d8;border-left:1px solid #d8d8d8;"></div>
<div class="b" style="left:92px;top:419px;width:1px;height:21px;background:#d8d8d8;"></div>
<div class="b" style="left:140px;top:419px;width:1px;height:21px;background:#d8d8d8;"></div>
<div class="b" style="left:239px;top:419px;width:1px;height:21px;background:#d8d8d8;"></div>
<div class="b" style="left:344px;top:419px;width:1px;height:21px;background:#d8d8d8;"></div>
<div class="b" style="left:450px;top:419px;width:1px;height:21px;background:#d8d8d8;"></div>
<div class="b" style="left:543px;top:419px;width:1px;height:21px;background:#d8d8d8;"></div>
<div class="b" style="left:636px;top:419px;width:1px;height:21px;background:#d8d8d8;"></div>
<div class="b" style="left:741px;top:419px;width:1px;height:21px;background:#d8d8d8;"></div>
<div class="b" style="left:846px;top:419px;width:1px;height:21px;background:#d8d8d8;"></div>
<div class="b" style="left:951px;top:419px;width:1px;height:21px;background:#d8d8d8;"></div>
<div class="b" style="left:1056px;top:419px;width:1px;height:21px;background:#d8d8d8;"></div>
<div class="b" style="left:1161px;top:419px;width:1px;height:21px;background:#d8d8d8;"></div>
<div class="b" style="left:61px;top:423px;width:13px;height:13px;background:#fff;border:1px solid #a3a3a3;"></div>
<svg style="left:61px;top:423px" width="13" height="13" viewBox="0 0 13 13"><path d="M3.2,6.6 L5.4,9 L9.8,3.6" stroke="#3c3c3c" stroke-width="1.9" fill="none"/></svg>
<div class="t" style="left:142.80px;top:421.84px;font-size:12px;line-height:16px;color:#2277cc;transform:scaleX(1.0534);transform-origin:left center;">1113114</div>
<div class="t" style="left:142.00px;width:300px;text-align:center;top:421.84px;font-size:12px;line-height:16px;color:#111;transform:scaleX(1.1506);transform-origin:center center;">3/1/17</div>
<div class="t" style="left:346.00px;top:421.84px;font-size:12px;line-height:16px;color:#8a0a8a;">01</div>
<div class="t" style="left:347.10px;width:300px;text-align:center;top:421.84px;font-size:12px;line-height:16px;color:#111;transform:scaleX(1.1362);transform-origin:center center;">4/10/17</div>
<div class="t" style="left:440.00px;width:300px;text-align:center;top:421.84px;font-size:12px;line-height:16px;color:#111;transform:scaleX(1.1362);transform-origin:center center;">4/10/17</div>
<div class="t" style="right:442.50px;top:421.84px;font-size:12px;line-height:16px;color:#111;">3,630.65</div>
<div class="t" style="right:338.50px;top:421.84px;font-size:12px;line-height:16px;color:#111;">151.93</div>
<div class="t" style="right:128.00px;top:421.84px;font-size:12px;line-height:16px;color:#111;">3630.65</div>
<div class="t" style="right:22.70px;top:421.84px;font-size:12px;line-height:16px;color:#111;">0.00</div>
<div class="b" style="left:42px;top:441px;width:1120px;height:22px;background:linear-gradient(#d8eaf1 0,#c6e0e9 5px,#b6d8e4 10px,#a6cddc 10.5px,#a3cadb 20px,#9cc6d8 100%);border-left:1px solid #d8d8d8;"></div>
<div class="b" style="left:92px;top:441px;width:1px;height:21px;background:#bcd8e3;"></div>
<div class="b" style="left:140px;top:441px;width:1px;height:21px;background:#bcd8e3;"></div>
<div class="b" style="left:239px;top:441px;width:1px;height:21px;background:#bcd8e3;"></div>
<div class="b" style="left:344px;top:441px;width:1px;height:21px;background:#bcd8e3;"></div>
<div class="b" style="left:450px;top:441px;width:1px;height:21px;background:#bcd8e3;"></div>
<div class="b" style="left:543px;top:441px;width:1px;height:21px;background:#bcd8e3;"></div>
<div class="b" style="left:636px;top:441px;width:1px;height:21px;background:#bcd8e3;"></div>
<div class="b" style="left:741px;top:441px;width:1px;height:21px;background:#bcd8e3;"></div>
<div class="b" style="left:846px;top:441px;width:1px;height:21px;background:#bcd8e3;"></div>
<div class="b" style="left:951px;top:441px;width:1px;height:21px;background:#bcd8e3;"></div>
<div class="b" style="left:1056px;top:441px;width:1px;height:21px;background:#bcd8e3;"></div>
<div class="b" style="left:1161px;top:441px;width:1px;height:21px;background:#bcd8e3;"></div>
<div class="b" style="left:42px;top:440px;width:51px;height:23px;background:#ffff9e;border:1px solid #000;"></div>
<svg style="left:43px;top:441px" width="49" height="21" viewBox="0 0 49 21"><rect x="0.5" y="0.5" width="48" height="20" fill="none" stroke="#000" stroke-width="1" stroke-dasharray="1 1"/></svg>
<div class="b" style="left:61px;top:445px;width:13px;height:13px;background:#fff;border:1px solid #a3a3a3;"></div>
<svg style="left:61px;top:445px" width="13" height="13" viewBox="0 0 13 13"><path d="M3.2,6.6 L5.4,9 L9.8,3.6" stroke="#3c3c3c" stroke-width="1.9" fill="none"/></svg>
<svg style="left:108px;top:444px" width="16" height="16" viewBox="0 0 16 16"><path d="M4.6,10.2 L5.3,14.3 L8.6,11 Z" fill="#444"/><ellipse cx="8" cy="5.9" rx="6.9" ry="4.8" fill="none" stroke="#444" stroke-width="1.5"/><rect x="4.1" y="5" width="1.6" height="1.6" fill="#444"/><rect x="7.2" y="5" width="1.6" height="1.6" fill="#444"/><rect x="10.3" y="5" width="1.6" height="1.6" fill="#444"/></svg>
<div class="t" style="left:142.80px;top:443.84px;font-size:12px;line-height:16px;color:#2277cc;transform:scaleX(1.0325);transform-origin:left center;">1113340</div>
<div class="t" style="left:142.00px;width:300px;text-align:center;top:443.84px;font-size:12px;line-height:16px;color:#111;transform:scaleX(1.1506);transform-origin:center center;">3/2/17</div>
<div class="t" style="left:346.00px;top:443.84px;font-size:12px;line-height:16px;color:#8a0a8a;">01</div>
<div class="t" style="left:347.10px;width:300px;text-align:center;top:443.84px;font-size:12px;line-height:16px;color:#111;transform:scaleX(1.1362);transform-origin:center center;">4/10/17</div>
<div class="t" style="left:440.00px;width:300px;text-align:center;top:443.84px;font-size:12px;line-height:16px;color:#111;transform:scaleX(1.1362);transform-origin:center center;">4/10/17</div>
<div class="t" style="right:442.50px;top:443.84px;font-size:12px;line-height:16px;color:#111;">705.00</div>
<div class="t" style="right:338.50px;top:443.84px;font-size:12px;line-height:16px;color:#111;">14.10</div>
<div class="t" style="right:128.00px;top:443.84px;font-size:12px;line-height:16px;color:#111;">705.00</div>
<div class="t" style="right:22.70px;top:443.84px;font-size:12px;line-height:16px;color:#111;">0.00</div>
<div class="b" style="left:42px;top:463px;width:1120px;height:22px;background:#fff;border-bottom:1px solid #d8d8d8;border-left:1px solid #d8d8d8;"></div>
<div class="b" style="left:92px;top:463px;width:1px;height:21px;background:#d8d8d8;"></div>
<div class="b" style="left:140px;top:463px;width:1px;height:21px;background:#d8d8d8;"></div>
<div class="b" style="left:239px;top:463px;width:1px;height:21px;background:#d8d8d8;"></div>
<div class="b" style="left:344px;top:463px;width:1px;height:21px;background:#d8d8d8;"></div>
<div class="b" style="left:450px;top:463px;width:1px;height:21px;background:#d8d8d8;"></div>
<div class="b" style="left:543px;top:463px;width:1px;height:21px;background:#d8d8d8;"></div>
<div class="b" style="left:636px;top:463px;width:1px;height:21px;background:#d8d8d8;"></div>
<div class="b" style="left:741px;top:463px;width:1px;height:21px;background:#d8d8d8;"></div>
<div class="b" style="left:846px;top:463px;width:1px;height:21px;background:#d8d8d8;"></div>
<div class="b" style="left:951px;top:463px;width:1px;height:21px;background:#d8d8d8;"></div>
<div class="b" style="left:1056px;top:463px;width:1px;height:21px;background:#d8d8d8;"></div>
<div class="b" style="left:1161px;top:463px;width:1px;height:21px;background:#d8d8d8;"></div>
<div class="b" style="left:61px;top:467px;width:13px;height:13px;background:#fff;border:1px solid #a3a3a3;"></div>
<div class="t" style="left:142.80px;top:465.84px;font-size:12px;line-height:16px;color:#2277cc;transform:scaleX(1.0325);transform-origin:left center;">1113822</div>
<div class="t" style="left:142.00px;width:300px;text-align:center;top:465.84px;font-size:12px;line-height:16px;color:#111;transform:scaleX(1.1506);transform-origin:center center;">3/6/17</div>
<div class="t" style="left:346.00px;top:465.84px;font-size:12px;line-height:16px;color:#8a0a8a;">01</div>
<div class="t" style="left:347.10px;width:300px;text-align:center;top:465.84px;font-size:12px;line-height:16px;color:#111;transform:scaleX(1.1362);transform-origin:center center;">4/10/17</div>
<div class="t" style="left:440.00px;width:300px;text-align:center;top:465.84px;font-size:12px;line-height:16px;color:#111;transform:scaleX(1.1362);transform-origin:center center;">4/10/17</div>
<div class="t" style="right:442.50px;top:465.84px;font-size:12px;line-height:16px;color:#111;">5,176.79</div>
<div class="t" style="right:338.50px;top:465.84px;font-size:12px;line-height:16px;color:#111;">103.54</div>
<div class="t" style="right:22.70px;top:465.84px;font-size:12px;line-height:16px;color:#111;">5,176.79</div>
<div class="b" style="left:42px;top:485px;width:1120px;height:22px;background:#fff;border-bottom:1px solid #d8d8d8;border-left:1px solid #d8d8d8;"></div>
<div class="b" style="left:92px;top:485px;width:1px;height:21px;background:#d8d8d8;"></div>
<div class="b" style="left:140px;top:485px;width:1px;height:21px;background:#d8d8d8;"></div>
<div class="b" style="left:239px;top:485px;width:1px;height:21px;background:#d8d8d8;"></div>
<div class="b" style="left:344px;top:485px;width:1px;height:21px;background:#d8d8d8;"></div>
<div class="b" style="left:450px;top:485px;width:1px;height:21px;background:#d8d8d8;"></div>
<div class="b" style="left:543px;top:485px;width:1px;height:21px;background:#d8d8d8;"></div>
<div class="b" style="left:636px;top:485px;width:1px;height:21px;background:#d8d8d8;"></div>
<div class="b" style="left:741px;top:485px;width:1px;height:21px;background:#d8d8d8;"></div>
<div class="b" style="left:846px;top:485px;width:1px;height:21px;background:#d8d8d8;"></div>
<div class="b" style="left:951px;top:485px;width:1px;height:21px;background:#d8d8d8;"></div>
<div class="b" style="left:1056px;top:485px;width:1px;height:21px;background:#d8d8d8;"></div>
<div class="b" style="left:1161px;top:485px;width:1px;height:21px;background:#d8d8d8;"></div>
<div class="b" style="left:61px;top:489px;width:13px;height:13px;background:#fff;border:1px solid #a3a3a3;"></div>
<div class="t" style="left:142.80px;top:487.84px;font-size:12px;line-height:16px;color:#2277cc;transform:scaleX(1.0325);transform-origin:left center;">1114044</div>
<div class="t" style="left:142.00px;width:300px;text-align:center;top:487.84px;font-size:12px;line-height:16px;color:#111;transform:scaleX(1.1506);transform-origin:center center;">3/7/17</div>
<div class="t" style="left:346.00px;top:487.84px;font-size:12px;line-height:16px;color:#0a74da;">05</div>
<div class="t" style="left:347.10px;width:300px;text-align:center;top:487.84px;font-size:12px;line-height:16px;color:#111;transform:scaleX(1.1362);transform-origin:center center;">4/10/17</div>
<div class="t" style="left:440.00px;width:300px;text-align:center;top:487.84px;font-size:12px;line-height:16px;color:#111;transform:scaleX(1.1362);transform-origin:center center;">4/10/17</div>
<div class="t" style="right:442.50px;top:487.84px;font-size:12px;line-height:16px;color:#111;">266.33</div>
<div class="t" style="right:338.50px;top:487.84px;font-size:12px;line-height:16px;color:#111;">5.33</div>
<div class="t" style="right:22.70px;top:487.84px;font-size:12px;line-height:16px;color:#111;">266.33</div>
<div class="b" style="left:42px;top:507px;width:1120px;height:22px;background:#fff;border-bottom:1px solid #d8d8d8;border-left:1px solid #d8d8d8;"></div>
<div class="b" style="left:92px;top:507px;width:1px;height:21px;background:#d8d8d8;"></div>
<div class="b" style="left:140px;top:507px;width:1px;height:21px;background:#d8d8d8;"></div>
<div class="b" style="left:239px;top:507px;width:1px;height:21px;background:#d8d8d8;"></div>
<div class="b" style="left:344px;top:507px;width:1px;height:21px;background:#d8d8d8;"></div>
<div class="b" style="left:450px;top:507px;width:1px;height:21px;background:#d8d8d8;"></div>
<div class="b" style="left:543px;top:507px;width:1px;height:21px;background:#d8d8d8;"></div>
<div class="b" style="left:636px;top:507px;width:1px;height:21px;background:#d8d8d8;"></div>
<div class="b" style="left:741px;top:507px;width:1px;height:21px;background:#d8d8d8;"></div>
<div class="b" style="left:846px;top:507px;width:1px;height:21px;background:#d8d8d8;"></div>
<div class="b" style="left:951px;top:507px;width:1px;height:21px;background:#d8d8d8;"></div>
<div class="b" style="left:1056px;top:507px;width:1px;height:21px;background:#d8d8d8;"></div>
<div class="b" style="left:1161px;top:507px;width:1px;height:21px;background:#d8d8d8;"></div>
<div class="b" style="left:61px;top:511px;width:13px;height:13px;background:#fff;border:1px solid #a3a3a3;"></div>
<div class="t" style="left:142.80px;top:509.84px;font-size:12px;line-height:16px;color:#2277cc;transform:scaleX(1.0325);transform-origin:left center;">1114368</div>
<div class="t" style="left:142.00px;width:300px;text-align:center;top:509.84px;font-size:12px;line-height:16px;color:#111;transform:scaleX(1.1506);transform-origin:center center;">3/8/17</div>
<div class="t" style="left:346.00px;top:509.84px;font-size:12px;line-height:16px;color:#0a74da;">04</div>
<div class="t" style="left:347.10px;width:300px;text-align:center;top:509.84px;font-size:12px;line-height:16px;color:#111;transform:scaleX(1.1362);transform-origin:center center;">4/10/17</div>
<div class="t" style="left:440.00px;width:300px;text-align:center;top:509.84px;font-size:12px;line-height:16px;color:#111;transform:scaleX(1.1362);transform-origin:center center;">4/10/17</div>
<div class="t" style="right:442.50px;top:509.84px;font-size:12px;line-height:16px;color:#111;">20.80</div>
<div class="t" style="right:338.50px;top:509.84px;font-size:12px;line-height:16px;color:#111;">0.27</div>
<div class="t" style="right:22.70px;top:509.84px;font-size:12px;line-height:16px;color:#111;">20.80</div>
<div class="b" style="left:42px;top:529px;width:1120px;height:22px;background:#fff;border-bottom:1px solid #d8d8d8;border-left:1px solid #d8d8d8;"></div>
<div class="b" style="left:92px;top:529px;width:1px;height:21px;background:#d8d8d8;"></div>
<div class="b" style="left:140px;top:529px;width:1px;height:21px;background:#d8d8d8;"></div>
<div class="b" style="left:239px;top:529px;width:1px;height:21px;background:#d8d8d8;"></div>
<div class="b" style="left:344px;top:529px;width:1px;height:21px;background:#d8d8d8;"></div>
<div class="b" style="left:450px;top:529px;width:1px;height:21px;background:#d8d8d8;"></div>
<div class="b" style="left:543px;top:529px;width:1px;height:21px;background:#d8d8d8;"></div>
<div class="b" style="left:636px;top:529px;width:1px;height:21px;background:#d8d8d8;"></div>
<div class="b" style="left:741px;top:529px;width:1px;height:21px;background:#d8d8d8;"></div>
<div class="b" style="left:846px;top:529px;width:1px;height:21px;background:#d8d8d8;"></div>
<div class="b" style="left:951px;top:529px;width:1px;height:21px;background:#d8d8d8;"></div>
<div class="b" style="left:1056px;top:529px;width:1px;height:21px;background:#d8d8d8;"></div>
<div class="b" style="left:1161px;top:529px;width:1px;height:21px;background:#d8d8d8;"></div>
<div class="b" style="left:61px;top:533px;width:13px;height:13px;background:#fff;border:1px solid #a3a3a3;"></div>
<div class="t" style="left:142.80px;top:531.84px;font-size:12px;line-height:16px;color:#2277cc;transform:scaleX(1.0325);transform-origin:left center;">1114369</div>
<div class="t" style="left:142.00px;width:300px;text-align:center;top:531.84px;font-size:12px;line-height:16px;color:#111;transform:scaleX(1.1506);transform-origin:center center;">3/8/17</div>
<div class="t" style="left:346.00px;top:531.84px;font-size:12px;line-height:16px;color:#0a74da;">02</div>
<div class="t" style="left:347.10px;width:300px;text-align:center;top:531.84px;font-size:12px;line-height:16px;color:#111;transform:scaleX(1.1362);transform-origin:center center;">4/10/17</div>
<div class="t" style="left:440.00px;width:300px;text-align:center;top:531.84px;font-size:12px;line-height:16px;color:#111;transform:scaleX(1.1362);transform-origin:center center;">4/10/17</div>
<div class="t" style="right:442.50px;top:531.84px;font-size:12px;line-height:16px;color:#111;">81.00</div>
<div class="t" style="right:338.50px;top:531.84px;font-size:12px;line-height:16px;color:#111;">1.62</div>
<div class="t" style="right:22.70px;top:531.84px;font-size:12px;line-height:16px;color:#111;">81.00</div>
<div class="b" style="left:42px;top:551px;width:1120px;height:22px;background:#fff;border-bottom:1px solid #d8d8d8;border-left:1px solid #d8d8d8;"></div>
<div class="b" style="left:92px;top:551px;width:1px;height:21px;background:#d8d8d8;"></div>
<div class="b" style="left:140px;top:551px;width:1px;height:21px;background:#d8d8d8;"></div>
<div class="b" style="left:239px;top:551px;width:1px;height:21px;background:#d8d8d8;"></div>
<div class="b" style="left:344px;top:551px;width:1px;height:21px;background:#d8d8d8;"></div>
<div class="b" style="left:450px;top:551px;width:1px;height:21px;background:#d8d8d8;"></div>
<div class="b" style="left:543px;top:551px;width:1px;height:21px;background:#d8d8d8;"></div>
<div class="b" style="left:636px;top:551px;width:1px;height:21px;background:#d8d8d8;"></div>
<div class="b" style="left:741px;top:551px;width:1px;height:21px;background:#d8d8d8;"></div>
<div class="b" style="left:846px;top:551px;width:1px;height:21px;background:#d8d8d8;"></div>
<div class="b" style="left:951px;top:551px;width:1px;height:21px;background:#d8d8d8;"></div>
<div class="b" style="left:1056px;top:551px;width:1px;height:21px;background:#d8d8d8;"></div>
<div class="b" style="left:1161px;top:551px;width:1px;height:21px;background:#d8d8d8;"></div>
<div class="b" style="left:61px;top:555px;width:13px;height:13px;background:#fff;border:1px solid #a3a3a3;"></div>
<div class="t" style="left:142.80px;top:553.84px;font-size:12px;line-height:16px;color:#2277cc;transform:scaleX(1.0325);transform-origin:left center;">1114515</div>
<div class="t" style="left:142.00px;width:300px;text-align:center;top:553.84px;font-size:12px;line-height:16px;color:#111;transform:scaleX(1.1506);transform-origin:center center;">3/8/17</div>
<div class="t" style="left:346.00px;top:553.84px;font-size:12px;line-height:16px;color:#0a74da;">02</div>
<div class="t" style="left:347.10px;width:300px;text-align:center;top:553.84px;font-size:12px;line-height:16px;color:#111;transform:scaleX(1.1362);transform-origin:center center;">4/10/17</div>
<div class="t" style="left:440.00px;width:300px;text-align:center;top:553.84px;font-size:12px;line-height:16px;color:#111;transform:scaleX(1.1362);transform-origin:center center;">4/10/17</div>
<div class="t" style="right:442.50px;top:553.84px;font-size:12px;line-height:16px;color:#e8202a;">-1,090.57</div>
<div class="t" style="right:338.50px;top:553.84px;font-size:12px;line-height:16px;color:#111;">0.00</div>
<div class="t" style="right:22.70px;top:553.84px;font-size:12px;line-height:16px;color:#e8202a;">-1,090.57</div>
<div class="b" style="left:42px;top:573px;width:1120px;height:22px;background:#fff;border-bottom:1px solid #d8d8d8;border-left:1px solid #d8d8d8;"></div>
<div class="b" style="left:92px;top:573px;width:1px;height:21px;background:#d8d8d8;"></div>
<div class="b" style="left:140px;top:573px;width:1px;height:21px;background:#d8d8d8;"></div>
<div class="b" style="left:239px;top:573px;width:1px;height:21px;background:#d8d8d8;"></div>
<div class="b" style="left:344px;top:573px;width:1px;height:21px;background:#d8d8d8;"></div>
<div class="b" style="left:450px;top:573px;width:1px;height:21px;background:#d8d8d8;"></div>
<div class="b" style="left:543px;top:573px;width:1px;height:21px;background:#d8d8d8;"></div>
<div class="b" style="left:636px;top:573px;width:1px;height:21px;background:#d8d8d8;"></div>
<div class="b" style="left:741px;top:573px;width:1px;height:21px;background:#d8d8d8;"></div>
<div class="b" style="left:846px;top:573px;width:1px;height:21px;background:#d8d8d8;"></div>
<div class="b" style="left:951px;top:573px;width:1px;height:21px;background:#d8d8d8;"></div>
<div class="b" style="left:1056px;top:573px;width:1px;height:21px;background:#d8d8d8;"></div>
<div class="b" style="left:1161px;top:573px;width:1px;height:21px;background:#d8d8d8;"></div>
<div class="b" style="left:61px;top:577px;width:13px;height:13px;background:#fff;border:1px solid #a3a3a3;"></div>
<div class="t" style="left:142.80px;top:575.84px;font-size:12px;line-height:16px;color:#2277cc;transform:scaleX(1.0325);transform-origin:left center;">1114634</div>
<div class="t" style="left:142.00px;width:300px;text-align:center;top:575.84px;font-size:12px;line-height:16px;color:#111;transform:scaleX(1.1506);transform-origin:center center;">3/9/17</div>
<div class="t" style="left:346.00px;top:575.84px;font-size:12px;line-height:16px;color:#8a0a8a;">01</div>
<div class="t" style="left:347.10px;width:300px;text-align:center;top:575.84px;font-size:12px;line-height:16px;color:#111;transform:scaleX(1.1362);transform-origin:center center;">4/10/17</div>
<div class="t" style="left:440.00px;width:300px;text-align:center;top:575.84px;font-size:12px;line-height:16px;color:#111;transform:scaleX(1.1362);transform-origin:center center;">4/10/17</div>
<div class="t" style="right:442.50px;top:575.84px;font-size:12px;line-height:16px;color:#111;">11,491.14</div>
<div class="t" style="right:338.50px;top:575.84px;font-size:12px;line-height:16px;color:#111;">229.82</div>
<div class="t" style="right:22.70px;top:575.84px;font-size:12px;line-height:16px;color:#111;">11,491.14</div>
<div class="b" style="left:42px;top:595px;width:1120px;height:3px;background:#fff;border-left:1px solid #d8d8d8;"></div>
<div class="b" style="left:92px;top:595px;width:1px;height:3px;background:#d8d8d8;"></div>
<div class="b" style="left:140px;top:595px;width:1px;height:3px;background:#d8d8d8;"></div>
<div class="b" style="left:239px;top:595px;width:1px;height:3px;background:#d8d8d8;"></div>
<div class="b" style="left:344px;top:595px;width:1px;height:3px;background:#d8d8d8;"></div>
<div class="b" style="left:450px;top:595px;width:1px;height:3px;background:#d8d8d8;"></div>
<div class="b" style="left:543px;top:595px;width:1px;height:3px;background:#d8d8d8;"></div>
<div class="b" style="left:636px;top:595px;width:1px;height:3px;background:#d8d8d8;"></div>
<div class="b" style="left:741px;top:595px;width:1px;height:3px;background:#d8d8d8;"></div>
<div class="b" style="left:846px;top:595px;width:1px;height:3px;background:#d8d8d8;"></div>
<div class="b" style="left:951px;top:595px;width:1px;height:3px;background:#d8d8d8;"></div>
<div class="b" style="left:1056px;top:595px;width:1px;height:3px;background:#d8d8d8;"></div>
<div class="b" style="left:1161px;top:595px;width:1px;height:3px;background:#d8d8d8;"></div>
<div class="b" style="left:23px;top:597px;width:1139px;height:20px;background:#a3bdd4;border:1.5px solid #000;"></div>
<div class="t" style="right:443.50px;top:599.24px;font-size:12.3px;line-height:16px;font-weight:700;color:#111;">$371,048.70</div>
<div class="t" style="right:340.00px;top:599.24px;font-size:12.3px;line-height:16px;font-weight:700;color:#111;">$7,292.31</div>
<div class="t" style="right:234.00px;top:599.24px;font-size:12.3px;line-height:16px;font-weight:700;color:#111;">$0.00</div>
<div class="t" style="right:129.00px;top:599.24px;font-size:12.3px;line-height:16px;font-weight:700;color:#111;">$7,092.13</div>
<div class="t" style="right:24.00px;top:599.24px;font-size:12.3px;line-height:16px;font-weight:700;color:#111;">$363,956.57</div>
<div class="b" style="left:3px;top:624px;width:84px;height:27px;background:#ececec;border:1px solid #adadad;"></div>
<div class="t" style="left:-105.00px;width:300px;text-align:center;top:630.02px;font-size:11.5px;line-height:16px;color:#7a7a7a;">Report</div>
<div class="b" style="left:90px;top:624px;width:84px;height:27px;background:#ececec;border:1px solid #adadad;"></div>
<div class="t" style="left:-18.00px;width:300px;text-align:center;top:630.02px;font-size:11.5px;line-height:16px;color:#000;">Schedule</div>
<div class="b" style="left:836px;top:624px;width:84px;height:27px;background:#ececec;border:1px solid #adadad;"></div>
<div class="t" style="left:728.00px;width:300px;text-align:center;top:630.02px;font-size:11.5px;line-height:16px;color:#000;">Print</div>
<div class="b" style="left:923px;top:624px;width:84px;height:27px;background:#ececec;border:1px solid #adadad;"></div>
<div class="t" style="left:815.00px;width:300px;text-align:center;top:630.02px;font-size:11.5px;line-height:16px;color:#000;">Save</div>
<div class="b" style="left:1010px;top:624px;width:84px;height:27px;background:#ececec;border:1px solid #adadad;"></div>
<div class="t" style="left:902.00px;width:300px;text-align:center;top:630.02px;font-size:11.5px;line-height:16px;color:#000;">Cancel</div>
<div class="b" style="left:1097px;top:624px;width:84px;height:27px;background:#ececec;border:1px solid #adadad;"></div>
<div class="t" style="left:989.00px;width:300px;text-align:center;top:630.02px;font-size:11.5px;line-height:16px;color:#000;">Exit</div>
<svg style="left:0;top:0" width="1183" height="765" viewBox="0 0 1183 765"><defs><linearGradient id="g1" x1="629" x2="767" y1="0" y2="0" gradientUnits="userSpaceOnUse"><stop offset="0" stop-color="#f7e3d4"/><stop offset="0.5" stop-color="#f8c392"/><stop offset="1" stop-color="#fb983e"/></linearGradient></defs><path d="M637,72 L759,72 Q767,72 767,80 L767,125 Q767,133 759,133 L637,133 Q629,133 629,125 L629,106.5 L586.7,63.4 L629,87.5 L629,80 Q629,72 637,72 Z" fill="#c0c0c0" transform="translate(3.5,4)"/><path d="M637,72 L759,72 Q767,72 767,80 L767,125 Q767,133 759,133 L637,133 Q629,133 629,125 L629,106.5 L586.7,63.4 L629,87.5 L629,80 Q629,72 637,72 Z" fill="url(#g1)" stroke="#f7933b" stroke-width="2" stroke-linejoin="round"/></svg>
<div class="t" style="left:548.00px;width:300px;text-align:center;top:85.55px;font-size:14.85px;line-height:16px;color:#111;">Make sure Batch is</div>
<div class="t" style="left:548.00px;width:300px;text-align:center;top:102.55px;font-size:14.85px;line-height:16px;color:#111;">selected</div>
<svg style="left:0;top:0" width="1183" height="765" viewBox="0 0 1183 765"><defs><linearGradient id="g2" x1="190" x2="341" y1="0" y2="0" gradientUnits="userSpaceOnUse"><stop offset="0" stop-color="#f7e3d4"/><stop offset="0.5" stop-color="#f8c392"/><stop offset="1" stop-color="#fb983e"/></linearGradient></defs><path d="M198,281 L333,281 Q341,281 341,289 L341,363 Q341,371 333,371 L198,371 Q190,371 190,363 L190,331 L79.5,384 L190,311 L190,289 Q190,281 198,281 Z" fill="#c0c0c0" transform="translate(3.5,4)"/><path d="M198,281 L333,281 Q341,281 341,289 L341,363 Q341,371 333,371 L198,371 Q190,371 190,363 L190,331 L79.5,384 L190,311 L190,289 Q190,281 198,281 Z" fill="url(#g2)" stroke="#f7933b" stroke-width="2" stroke-linejoin="round"/></svg>
<div class="t" style="left:115.50px;width:300px;text-align:center;top:300.45px;font-size:14.85px;line-height:16px;color:#111;">Select the vendors and</div>
<div class="t" style="left:115.50px;width:300px;text-align:center;top:317.45px;font-size:14.85px;line-height:16px;color:#111;">specific invoices to</div>
<div class="t" style="left:115.50px;width:300px;text-align:center;top:334.45px;font-size:14.85px;line-height:16px;color:#111;">include in batch</div>
<svg style="left:0;top:0" width="1183" height="765" viewBox="0 0 1183 765"><defs><linearGradient id="g3" x1="8" x2="131" y1="0" y2="0" gradientUnits="userSpaceOnUse"><stop offset="0" stop-color="#f7e3d4"/><stop offset="0.5" stop-color="#f8c392"/><stop offset="1" stop-color="#fb983e"/></linearGradient></defs><path d="M16,666 L50,666 L45.2,648.6 L77.6,666 L123,666 Q131,666 131,674 L131,729 Q131,737 123,737 L16,737 Q8,737 8,729 L8,674 Q8,666 16,666 Z" fill="#666666" transform="translate(3.5,4)"/><path d="M16,666 L50,666 L45.2,648.6 L77.6,666 L123,666 Q131,666 131,674 L131,729 Q131,737 123,737 L16,737 Q8,737 8,729 L8,674 Q8,666 16,666 Z" fill="url(#g3)" stroke="#f7933b" stroke-width="2" stroke-linejoin="round"/></svg>
<div class="t" style="left:-80.50px;width:300px;text-align:center;top:677.15px;font-size:14.85px;line-height:16px;color:#111;">Runs the</div>
<div class="t" style="left:-80.50px;width:300px;text-align:center;top:694.15px;font-size:14.85px;line-height:16px;color:#111;">Scheduled</div>
<div class="t" style="left:-80.50px;width:300px;text-align:center;top:711.15px;font-size:14.85px;line-height:16px;color:#111;">Checks Report</div>
<svg style="left:0;top:0" width="1183" height="765" viewBox="0 0 1183 765"><defs><linearGradient id="g4" x1="193" x2="344" y1="0" y2="0" gradientUnits="userSpaceOnUse"><stop offset="0" stop-color="#f7e3d4"/><stop offset="0.5" stop-color="#f8c392"/><stop offset="1" stop-color="#fb983e"/></linearGradient></defs><path d="M201,659 L336,659 Q344,659 344,667 L344,741 Q344,749 336,749 L201,749 Q193,749 193,741 L193,708.5 L130.5,645.5 L193,689 L193,667 Q193,659 201,659 Z" fill="#666666" transform="translate(3.5,4)"/><path d="M201,659 L336,659 Q344,659 344,667 L344,741 Q344,749 336,749 L201,749 Q193,749 193,741 L193,708.5 L130.5,645.5 L193,689 L193,667 Q193,659 201,659 Z" fill="url(#g4)" stroke="#f7933b" stroke-width="2" stroke-linejoin="round"/></svg>
<div class="t" style="left:118.50px;width:300px;text-align:center;top:678.55px;font-size:14.85px;line-height:16px;color:#111;">Schedules all invoices</div>
<div class="t" style="left:118.50px;width:300px;text-align:center;top:695.55px;font-size:14.85px;line-height:16px;color:#111;">prior to a selected cut</div>
<div class="t" style="left:118.50px;width:300px;text-align:center;top:712.55px;font-size:14.85px;line-height:16px;color:#111;">off date</div>
<svg style="left:0;top:0" width="1183" height="765" viewBox="0 0 1183 765"><defs><linearGradient id="g5" x1="681" x2="831" y1="0" y2="0" gradientUnits="userSpaceOnUse"><stop offset="0" stop-color="#f7e3d4"/><stop offset="0.5" stop-color="#f8c392"/><stop offset="1" stop-color="#fb983e"/></linearGradient></defs><path d="M689,658.5 L823,658.5 Q831,658.5 831,666.5 L831,663 L884.5,651.5 L831,684 L831,692 Q831,700 823,700 L689,700 Q681,700 681,692 L681,666.5 Q681,658.5 689,658.5 Z" fill="#666666" transform="translate(3.5,4)"/><path d="M689,658.5 L823,658.5 Q831,658.5 831,666.5 L831,663 L884.5,651.5 L831,684 L831,692 Q831,700 823,700 L689,700 Q681,700 681,692 L681,666.5 Q681,658.5 689,658.5 Z" fill="url(#g5)" stroke="#f7933b" stroke-width="2" stroke-linejoin="round"/></svg>
<div class="t" style="left:606.00px;width:300px;text-align:center;top:671.55px;font-size:14.85px;line-height:16px;color:#111;">Prints the check batch</div>
<svg style="left:0;top:0" width="1183" height="765" viewBox="0 0 1183 765"><defs><linearGradient id="g6" x1="1010.5" x2="1162" y1="0" y2="0" gradientUnits="userSpaceOnUse"><stop offset="0" stop-color="#f7e3d4"/><stop offset="0.5" stop-color="#f8c392"/><stop offset="1" stop-color="#fb983e"/></linearGradient></defs><path d="M1018.5,680.3 L1154,680.3 Q1162,680.3 1162,688.3 L1162,716.5 Q1162,724.5 1154,724.5 L1018.5,724.5 Q1010.5,724.5 1010.5,716.5 L1010.5,706 L969,644 L1010.5,685 L1010.5,688.3 Q1010.5,680.3 1018.5,680.3 Z" fill="#666666" transform="translate(3.5,4)"/><path d="M1018.5,680.3 L1154,680.3 Q1162,680.3 1162,688.3 L1162,716.5 Q1162,724.5 1154,724.5 L1018.5,724.5 Q1010.5,724.5 1010.5,716.5 L1010.5,706 L969,644 L1010.5,685 L1010.5,688.3 Q1010.5,680.3 1018.5,680.3 Z" fill="url(#g6)" stroke="#f7933b" stroke-width="2" stroke-linejoin="round"/></svg>
<div class="t" style="left:936.25px;width:300px;text-align:center;top:694.85px;font-size:14.85px;line-height:16px;color:#111;">Saves your changes</div>
</body></html>
